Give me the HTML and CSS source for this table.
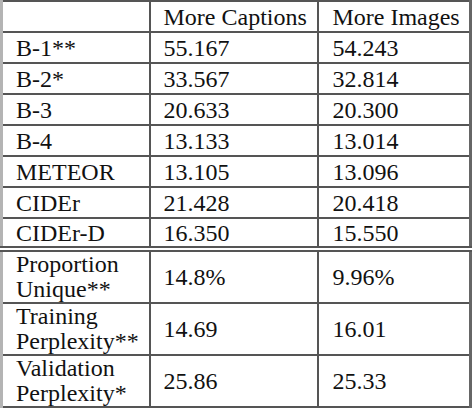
FILE: index.html
```html
<!DOCTYPE html>
<html lang="en">
<head>
  <meta charset="UTF-8">
  <title>Results table</title>
  <link rel="stylesheet" href="styles.css">
</head>
<body>

  <!-- TABELA DE RESULTADOS -->
  <table class="resultados">
    <colgroup>
      <col class="col-nome">
      <col class="col-legendas">
      <col class="col-imagens">
    </colgroup>
    <tr class="cabecalho">
      <th></th>
      <th>More Captions</th>
      <th>More Images</th>
    </tr>
    <tr><td>B-1**</td><td>55.167</td><td>54.243</td></tr>
    <tr><td>B-2*</td><td>33.567</td><td>32.814</td></tr>
    <tr><td>B-3</td><td>20.633</td><td>20.300</td></tr>
    <tr><td>B-4</td><td>13.133</td><td>13.014</td></tr>
    <tr><td>METEOR</td><td>13.105</td><td>13.096</td></tr>
    <tr><td>CIDEr</td><td>21.428</td><td>20.418</td></tr>
    <tr class="ultima"><td>CIDEr-D</td><td>16.350</td><td>15.550</td></tr>
    <tr class="dupla separador">
      <td class="nome">Proportion<br>Unique**</td><td>14.8%</td><td>9.96%</td>
    </tr>
    <tr class="dupla">
      <td class="nome">Training<br>Perplexity**</td><td>14.69</td><td>16.01</td>
    </tr>
    <tr class="dupla">
      <td class="nome">Validation<br>Perplexity*</td><td>25.86</td><td>25.33</td>
    </tr>
  </table>

</body>
</html>
```

FILE: styles.css
```css
/* === GERAL === */
* { margin: 0; padding: 0; box-sizing: border-box; }
body { background-color: #fff; color: #111; font-family: 'Liberation Serif', 'Times New Roman', serif; }

/* === TABELA === */
.resultados {
  border-collapse: collapse; width: 472px; font-size: 24px;
  border-left: 3px solid #b4b4b4;
}
.col-nome { width: 149px; }
.col-legendas { width: 170px; }
.col-imagens { width: 153px; }

.resultados th, .resultados td {
  border: 2px solid #555; padding: 0 0 0 13px; height: 31px; line-height: 26px;
  text-align: left; font-weight: normal; vertical-align: middle; white-space: nowrap;
}
.resultados td:first-child, .resultados th:first-child { border-left-color: #b4b4b4; border-left-width: 3px; }
.resultados td:last-child, .resultados th:last-child { border-right: 3px solid #666; }

.ultima td { height: 31px; }
.separador td { border-top: 6px double #555; }

.dupla td { height: 52px; }
.dupla .nome { line-height: 25px; vertical-align: top; padding-top: 0; }
```
